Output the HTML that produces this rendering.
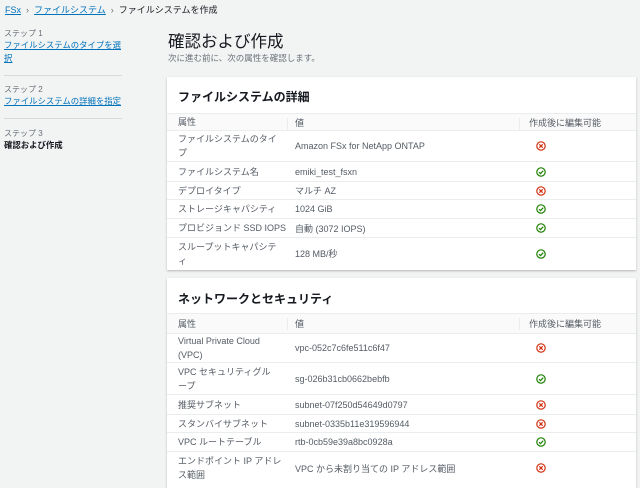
<!DOCTYPE html>
<html><head><meta charset="utf-8"><style>
*{margin:0;padding:0;box-sizing:border-box}
body{width:640px;height:485px;overflow:hidden;background:#f2f3f3;font-family:"Liberation Sans","Noto Sans CJK JP",sans-serif;color:#545b64;position:relative;font-size:9px}
.abs{position:absolute}
a{color:#0073bb;text-decoration:underline}
.bc{left:5px;top:3px;font-size:9px;color:#16191f}
.side{left:4px;width:122px}
.st{font-size:8px;color:#687078}
.sl{font-size:8.4px;line-height:13px}
.hr{position:absolute;left:4px;width:118px;height:1px;background:#d5dbdb}
.card{position:absolute;left:167px;width:469px;background:#fff;box-shadow:0 1px 2px rgba(0,0,0,.25)}
.card h2{font-size:12px;font-weight:bold;color:#16191f;padding:0 0 0 11px}
.th{background:#fafafa;border-top:1px solid #eaeded;border-bottom:1px solid #eaeded;color:#545b64}
.row{position:relative;border-bottom:1px solid #eaeded;display:flex;align-items:center}
.c1{position:absolute;left:11px;width:101px;line-height:14px}
.c2{position:absolute;left:128px}
.c3{position:absolute;left:362px}
.ic{position:absolute;left:369px;width:10px;height:10px}
.sep{position:absolute;width:1px;height:12px;background:#eaeded;top:4px}
</style></head><body>
<div class="abs bc"><a>FSx</a> &nbsp;<span style="color:#687078">&#8250;</span>&nbsp; <a>ファイルシステム</a> &nbsp;<span style="color:#687078">&#8250;</span>&nbsp; ファイルシステムを作成</div>
<div class="abs side" style="top:28px"><div class="st">ステップ 1</div><div class="sl"><a>ファイルシステムのタイプを選択</a></div></div>
<div class="hr" style="top:75px"></div>
<div class="abs side" style="top:84px"><div class="st">ステップ 2</div><div class="sl"><a>ファイルシステムの詳細を指定</a></div></div>
<div class="hr" style="top:118px"></div>
<div class="abs side" style="top:128px"><div class="st">ステップ 3</div><div class="sl" style="color:#16191f;font-weight:bold">確認および作成</div></div>
<div class="abs" style="left:168px;top:28px;font-size:16.5px;color:#16191f">確認および作成</div>
<div class="abs" style="left:168px;top:52px;font-size:8.5px;color:#687078">次に進む前に、次の属性を確認します。</div>

<svg width="0" height="0" style="position:absolute"><defs>
<symbol id="x" viewBox="0 0 10 10"><circle cx="5" cy="5" r="4.2" fill="none" stroke="#d13212" stroke-width="1.2"/><path d="M3.3 3.3L6.7 6.7M6.7 3.3L3.3 6.7" stroke="#d13212" stroke-width="1.2"/></symbol>
<symbol id="ok" viewBox="0 0 10 10"><circle cx="5" cy="5" r="4.2" fill="none" stroke="#1d8102" stroke-width="1.2"/><path d="M3 5.2L4.5 6.6L7.2 3.7" fill="none" stroke="#1d8102" stroke-width="1.2"/></symbol>
</defs></svg>

<div class="card" style="top:77px;height:193px">
<h2 style="padding-top:11px;height:36px">ファイルシステムの詳細</h2>
<div class="row th" style="height:18px"><span class="c1">属性</span><span class="sep" style="left:120px"></span><span class="c2">値</span><span class="sep" style="left:352px"></span><span class="c3">作成後に編集可能</span></div>
<div class="row" style="height:31px"><span class="c1">ファイルシステムのタイプ</span><span class="c2">Amazon FSx for NetApp ONTAP</span><svg class="ic"><use href="#x"/></svg></div>
<div class="row" style="height:20px"><span class="c1">ファイルシステム名</span><span class="c2">emiki_test_fsxn</span><svg class="ic"><use href="#ok"/></svg></div>
<div class="row" style="height:18px"><span class="c1">デプロイタイプ</span><span class="c2">マルチ AZ</span><svg class="ic"><use href="#x"/></svg></div>
<div class="row" style="height:19px"><span class="c1">ストレージキャパシティ</span><span class="c2">1024 GiB</span><svg class="ic"><use href="#ok"/></svg></div>
<div class="row" style="height:19px"><span class="c1" style="width:115px">プロビジョンド SSD IOPS</span><span class="c2">自動 (3072 IOPS)</span><svg class="ic"><use href="#ok"/></svg></div>
<div class="row" style="height:31px;border:none"><span class="c1">スループットキャパシティ</span><span class="c2">128 MB/秒</span><svg class="ic"><use href="#ok"/></svg></div>
</div>

<div class="card" style="top:278px;height:210px">
<h2 style="padding-top:12px;height:35px">ネットワークとセキュリティ</h2>
<div class="row th" style="height:21px"><span class="c1">属性</span><span class="sep" style="left:120px"></span><span class="c2">値</span><span class="sep" style="left:352px"></span><span class="c3">作成後に編集可能</span></div>
<div class="row" style="height:29px"><span class="c1">Virtual Private Cloud (VPC)</span><span class="c2">vpc-052c7c6fe511c6f47</span><svg class="ic"><use href="#x"/></svg></div>
<div class="row" style="height:32px"><span class="c1">VPC セキュリティグループ</span><span class="c2">sg-026b31cb0662bebfb</span><svg class="ic"><use href="#ok"/></svg></div>
<div class="row" style="height:20px"><span class="c1">推奨サブネット</span><span class="c2">subnet-07f250d54649d0797</span><svg class="ic"><use href="#x"/></svg></div>
<div class="row" style="height:18px"><span class="c1">スタンバイサブネット</span><span class="c2">subnet-0335b11e319596944</span><svg class="ic"><use href="#x"/></svg></div>
<div class="row" style="height:19px"><span class="c1">VPC ルートテーブル</span><span class="c2">rtb-0cb59e39a8bc0928a</span><svg class="ic"><use href="#ok"/></svg></div>
<div class="row" style="height:32px;border:none"><span class="c1" style="width:110px">エンドポイント IP アドレ<br>ス範囲</span><span class="c2">VPC から未割り当ての IP アドレス範囲</span><svg class="ic"><use href="#x"/></svg></div>
</div>
</body></html>
